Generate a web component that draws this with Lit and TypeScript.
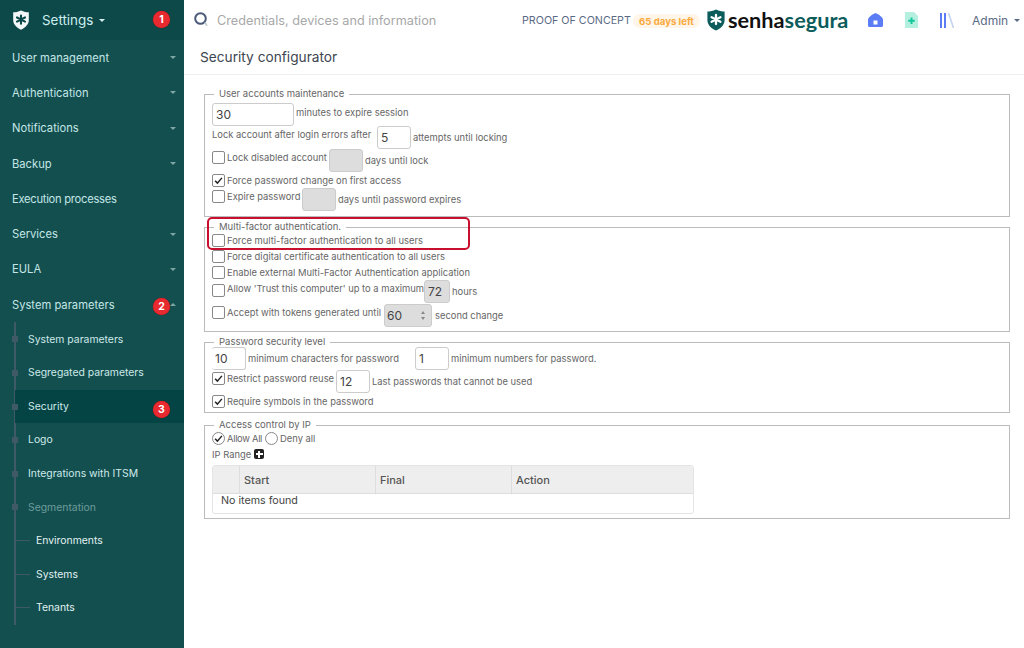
import { LitElement, html, css, svg } from "lit";
import { customElement } from "lit/decorators.js";

const caret = (up = false) => html`<span class="caret ${up ? "up" : ""}"></span>`;
const badge = (n: number) => html`<span class="badge">${n}</span>`;
const check = svg`<svg viewBox="0 0 13 13" width="11" height="11"><path d="M2.5 6.8 5.2 9.6 10.5 3.4" fill="none" stroke="#222" stroke-width="1.8"/></svg>`;
const cb = (on = false, cls = "") => html`<span class="cb ${cls}">${on ? check : ""}</span>`;
const shield = (bg: string, fg: string, w: number, h: number) => html`<svg width=${w} height=${h} viewBox="0 0 18 22"><path d="M9 0.5C12 2 15 2.6 17.6 2.6V11C17.6 16 13.5 19.6 9 21.6 4.5 19.6.4 16 .4 11V2.6C3 2.6 6 2 9 .5Z" fill=${bg}/><g stroke=${fg} stroke-width="2.3" stroke-linecap="round"><path d="M9 6V15M4.6 8.2 13.4 12.8M13.4 8.2 4.6 12.8"/></g></svg>`;

@customElement("app-root")
export class AppRoot extends LitElement {
  static styles = css`
    :host { display: flex; width: 1024px; height: 648px; overflow: hidden; background: #fff; font-family: Inter, "Noto Sans", sans-serif; color: #666; }
    * { box-sizing: border-box; }
    .side { width: 184px; flex: none; background: #134f4f; color: #c4e6e6; font-size: 11.2px; }
    .brand { height: 40px; background: #0d4949; display: flex; align-items: center; padding-left: 12px; position: relative; }
    .brand .title { margin-left: 12px; font-size: 13.4px; color: #cdeeee; }
    .brand .caret { position: static; margin-left: 6px; border-top-color: #d6eeee; }
    .badge { position: absolute; width: 17px; height: 17px; border-radius: 50%; background: #e8292f; color: #fff; font-size: 10.5px; font-weight: 700; display: flex; align-items: center; justify-content: center; left: 153px; box-shadow: 0 0 1px #a00; }
    .brand .badge { top: 11px; }
    .item { height: 35.3px; display: flex; align-items: center; padding-left: 12px; position: relative; }
    .item .badge { top: 11px; }
    .tight { letter-spacing: -.27px; }
    .caret { position: absolute; right: 8px; width: 0; height: 0; border-left: 3.5px solid transparent; border-right: 3.5px solid transparent; border-top: 3.5px solid #7fa5a5; }
    .caret.up { border-top: 0; border-bottom: 3.5px solid #7fa5a5; }
    .tree { position: relative; }
    .tree::before { content: ""; position: absolute; left: 14px; top: 0; width: 1.5px; height: 303px; background: #3f5a66; }
    .sub { height: 33.6px; display: flex; align-items: center; padding-left: 28px; position: relative; font-size: 10.4px; color: #cfe9e9; }
    .sub.bul::before { content: ""; position: absolute; left: 12px; top: 14px; width: 6px; height: 6px; background: #3f5a66; }
    .sub.on { background: #044444; margin-left: 15px; padding-left: 13px; }
    .sub.on::before { left: -3px; }
    .sub.on .badge { left: 138px; top: 11px; }
    .sub.dim { color: #6f9c9c; }
    .sub.leaf { padding-left: 36px; color: #e2f2f2; }
    .sub.leaf::before { content: ""; position: absolute; left: 15px; top: 16px; width: 15px; height: 1px; background: #3f5a66; }
    .main { flex: 1; min-width: 0; display: flex; flex-direction: column; }
    .top { height: 40px; display: flex; align-items: center; padding-left: 10px; }
    .search { flex: none; display: flex; width: 14px; margin-top: -1px; }
    .ph { margin-left: 9px; font-size: 12.7px; color: #a8a8a8; width: 305px; flex: none; white-space: nowrap; }
    .poc { font-size: 10.7px; color: #5a6a85; white-space: nowrap; width: 111px; flex: none; }
    .pill { width: 67px; height: 14px; margin-top: 2px; flex: none; border-radius: 7px; background: #fff5e8; color: #f9a93b; font-size: 9.6px; font-weight: 700; display: flex; align-items: center; justify-content: center; white-space: nowrap; }
    .logo { margin-left: 7px; display: flex; align-items: center; flex: none; width: 140px; font-family: Lato, sans-serif; font-weight: 700; font-size: 21.7px; color: #111; }
    .logo svg { margin-right: 3px; flex: none; }
    .logo b { color: #0d5c5c; font-weight: 700; }
    .ic { flex: none; display: flex; margin-left: 22px; }
    .ic.home { margin-left: 21px; }
    .admin { font-size: 12px; color: #5a6a85; margin-left: 18px; display: flex; align-items: center; width: 49px; }
    .admin .caret { position: static; margin-left: 6px; border-top-color: #5a6a85; }
    .head { height: 35px; border-bottom: 1px solid #eee; padding-left: 16px; font-size: 13.7px; color: #3c4650; display: flex; align-items: center; }
    .content { padding: 13px 14px 0 20px; }
    .wrap { position: relative; }
    .red { position: absolute; left: 3px; top: 129px; width: 263px; height: 33px; border: 2px solid #c8102e; border-radius: 5px; }
    fieldset { margin: 0 0 4px; padding: 3px 7px 5px; border: 1px solid #bbb; min-width: 0; }
    fieldset.mfa { padding-top: 1px; padding-bottom: 4px; }
    fieldset.pw { padding-top: 0; padding-bottom: 4px; }
    fieldset.ip { padding-top: 1px; padding-bottom: 4px; margin-top: 6px; }
    legend { margin-left: 2px; padding: 0 5px; font-size: 9.5px; line-height: 12px; color: #666; }
    .row { display: flex; align-items: flex-start; font-size: 9.4px; line-height: 13px; white-space: nowrap; }
    .mt1 { margin-top: 1px; }
    .mt2 { margin-top: 2px; }
    .mt3 { margin-top: 3px; }
    .mtn1 { margin-top: -1px; }
    .mid { margin: 2px 0 1px; }
    .cb { width: 13px; height: 13px; flex: none; border: 1px solid #888; border-radius: 2px; background: #fff; margin-right: 2px; display: flex; align-items: center; justify-content: center; }
    .cb.d2 { margin-top: 2px; }
    .cb.d4 { margin-top: 4px; }
    .rd { border-radius: 50%; }
    input { font: 12px Inter, sans-serif; color: #444; border: 1px solid #ccc; border-radius: 3px; padding: 0 3px; height: 23px; width: 34px; background: #fff; margin: 0; flex: none; outline: none; }
    input.w { width: 82px; }
    input.g { background: #ddd; }
    input.s { width: 26px; }
    input.nl { border-left: 0; }
    .after { align-self: center; margin-left: 2px; }
    .after.up { margin-top: -4px; }
    .after.m3 { margin-left: 3px; }
    .pre { margin-top: 2px; }
    .spin { display: flex; width: 48px; height: 23px; flex: none; background: #ddd; border: 1px solid #ccc; border-radius: 3px; align-items: center; }
    .spin input { border: 0; background: transparent; width: 32px; height: 21px; padding: 0 2px; }
    .arrows { display: flex; flex-direction: column; gap: 3px; margin-left: 4px; }
    .arrows i { width: 0; height: 0; border-left: 2.5px solid transparent; border-right: 2.5px solid transparent; border-bottom: 3px solid #888; }
    .arrows i + i { border-bottom: 0; border-top: 3px solid #888; }
    .allow { width: 38px; letter-spacing: -.3px; }
    .plus { width: 10px; height: 10px; margin-left: 3px; background: #222; border-radius: 2px; display: inline-flex; position: relative; margin-top: 1px; }
    .plus::before { content: ""; position: absolute; left: 1.5px; right: 1.5px; top: 4px; height: 2px; background: #fff; }
    .plus::after { content: ""; position: absolute; top: 1.5px; bottom: 1.5px; left: 4px; width: 2px; background: #fff; }
    .tbl { width: 482px; border: 1px solid #e4e4e4; border-radius: 3px; margin-top: 4px; }
    .tr { display: grid; grid-template-columns: 27px 136px 136px 1fr; height: 28px; background: #eee; border-bottom: 1px solid #ddd; font-size: 11px; color: #555; font-weight: 500; }
    .tr > div { display: flex; align-items: center; padding-left: 4px; border-right: 1px solid #ddd; }
    .tr > div:last-child { border-right: 0; }
    .none { height: 19px; padding-left: 8px; font-size: 10.7px; line-height: 13px; color: #444; }
  `;

  render() {
    const top = ["User management", "Authentication", "Notifications", "Backup", "Execution processes", "Services", "EULA"];
    const noCaret = new Set(["Execution processes"]);
    return html`
      <aside class="side">
        <div class="brand">${shield("#f4f7f7", "#0d4949", 18, 20)}<span class="title">Settings</span>${caret()}${badge(1)}</div>
        ${top.map((t) => html`<div class="item ${noCaret.has(t) ? "tight" : ""}">${t}${noCaret.has(t) ? "" : caret()}</div>`)}
        <div class="item">System parameters${caret(true)}${badge(2)}</div>
        <div class="tree">
          <div class="sub bul">System parameters</div>
          <div class="sub bul">Segregated parameters</div>
          <div class="sub bul on">Security${badge(3)}</div>
          <div class="sub bul">Logo</div>
          <div class="sub bul">Integrations with ITSM</div>
          <div class="sub bul dim">Segmentation</div>
          <div class="sub leaf">Environments</div>
          <div class="sub leaf">Systems</div>
          <div class="sub leaf">Tenants</div>
        </div>
      </aside>
      <div class="main">
        <header class="top">
          <span class="search"><svg width="14" height="15" viewBox="0 0 14 15"><circle cx="6.5" cy="6.5" r="5.3" fill="none" stroke="#4a5a78" stroke-width="2"/><path d="M10.5 10.5 13.2 13.6" stroke="#b8bfc9" stroke-width="1.4"/></svg></span>
          <span class="ph">Credentials, devices and information</span>
          <span class="poc">PROOF OF CONCEPT</span>
          <span class="pill">65 days left</span>
          <div class="logo">${shield("#0d5c5c", "#fff", 18, 22)}<span>senha<b>segura</b></span></div>
          <span class="ic home"><svg width="15" height="14" viewBox="0 0 15 14"><path d="M7.5 0 11 1.8 13.5 4Q15 5.2 15 7V12.5Q15 14 13.5 14H1.5Q0 14 0 12.5V7Q0 5.2 1.5 4L4 1.8Z" fill="#5b7cf5"/><rect x="5.5" y="7.5" width="4" height="4" fill="#fff"/></svg></span>
          <span class="ic"><svg width="13" height="16" viewBox="0 0 13 16"><path d="M0 0H9L13 4V16H0Z" fill="#b5efe0"/><path d="M6.5 5.5V12M3.2 8.8H9.8" stroke="#16c79a" stroke-width="2"/></svg></span>
          <span class="ic"><svg width="14" height="15" viewBox="0 0 14 15"><rect x="0" width="2" height="15" fill="#5b7cf5"/><rect x="4" width="2" height="15" fill="#5b7cf5"/><path d="M8.5 0 13.5 15" stroke="#c3d2ee" stroke-width="1.6"/></svg></span>
          <div class="admin">Admin${caret()}</div>
        </header>
        <div class="head">Security configurator</div>
        <div class="content"><div class="wrap">
          <fieldset>
            <legend>User accounts maintenance</legend>
            <div class="row"><input class="w" value="30" /><span class="after up">minutes to expire session</span></div>
            <div class="row"><span class="pre" style="width:165px">Lock account after login errors after</span><input value="5" /><span class="after">attempts until locking</span></div>
            <div class="row">${cb(false, "d2")}<span class="pre" style="width:102px">Lock disabled account</span><input class="g" /><span class="after">days until lock</span></div>
            <div class="row mid">${cb(true)}<span>Force password change on first access</span></div>
            <div class="row">${cb(false, "d2")}<span class="pre" style="width:75px">Expire password</span><input class="g" /><span class="after">days until password expires</span></div>
          </fieldset>
          <fieldset class="mfa">
            <legend>Multi-factor authentication.</legend>
            <div class="row">${cb()}<span>Force multi-factor authentication to all users</span></div>
            <div class="row mt3">${cb()}<span>Force digital certificate authentication to all users</span></div>
            <div class="row mt3">${cb()}<span>Enable external Multi-Factor Authentication application</span></div>
            <div class="row mt1">${cb(false, "d4")}<span class="pre" style="width:197px">Allow 'Trust this computer' up to a maximum</span><input class="g s" value="72" /><span class="after">hours</span></div>
            <div class="row mt1">${cb(false, "d2")}<span class="pre" style="width:157px">Accept with tokens generated until</span><div class="spin"><input value="60" /><div class="arrows"><i></i><i></i></div></div><span class="after m3">second change</span></div>
          </fieldset>
          <fieldset class="pw">
            <legend>Password security level</legend>
            <div class="row mtn1"><input class="nl" value="10" /><span class="after" style="width:167px">minimum characters for password</span><input value="1" /><span class="after">minimum numbers for password.</span></div>
            <div class="row">${cb(true, "d2")}<span class="pre" style="width:109px">Restrict password reuse</span><input value="12" /><span class="after">Last passwords that cannot be used</span></div>
            <div class="row mt2">${cb(true)}<span>Require symbols in the password</span></div>
          </fieldset>
          <fieldset class="ip">
            <legend>Access control by IP</legend>
            <div class="row">${cb(true, "rd")}<span class="allow">Allow All</span>${cb(false, "rd")}<span>Deny all</span></div>
            <div class="row mt3">IP Range<span class="plus"></span></div>
            <div class="tbl">
              <div class="tr"><div></div><div>Start</div><div>Final</div><div>Action</div></div>
              <div class="none">No items found</div>
            </div>
          </fieldset>
          <div class="red"></div>
        </div></div>
      </div>
    `;
  }
}
